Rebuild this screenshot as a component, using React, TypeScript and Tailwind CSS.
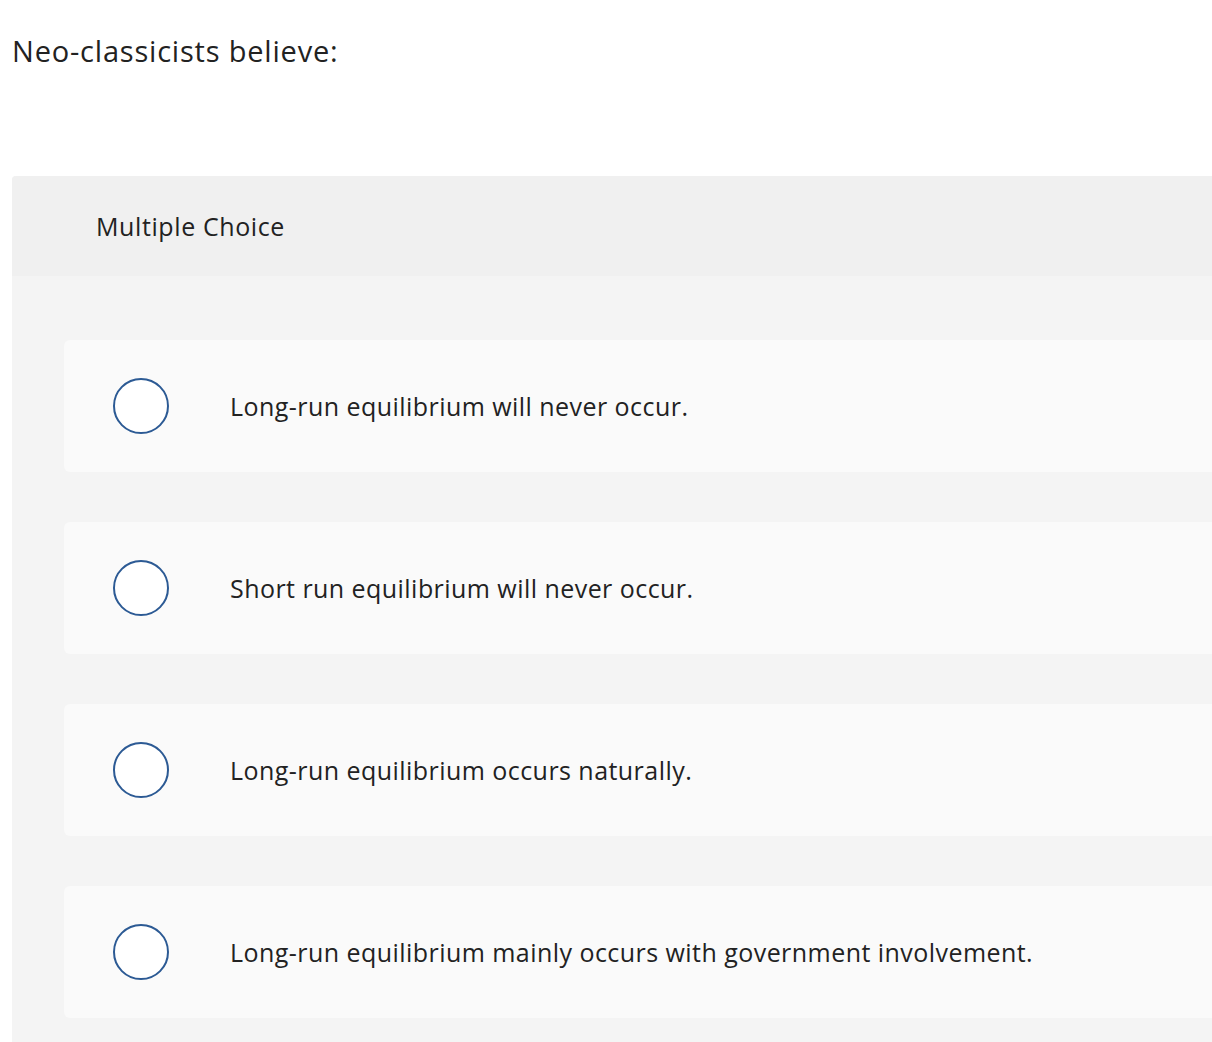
import React from 'react';

const OPTIONS = [
  'Long-run equilibrium will never occur.',
  'Short run equilibrium will never occur.',
  'Long-run equilibrium occurs naturally.',
  'Long-run equilibrium mainly occurs with government involvement.',
];

export default function App() {
  return (
    <div className="h-[1042px] w-full overflow-hidden bg-white text-[#222222] font-['Open_Sans','Liberation_Sans',sans-serif]">
      <div className="px-3 pt-[32px]">
        <p className="text-[29px] leading-[38px] tracking-[0.8px]">Neo-classicists believe:</p>
      </div>
      <div className="ml-3 mt-[106px] w-[1260px] overflow-hidden rounded-t-[4px] bg-[#f4f4f4]">
        <div className="flex h-[100px] items-center bg-[#f0f0f0] pl-[84px]">
          <span className="mt-[2px] text-[25px] tracking-[0.6px]">Multiple Choice</span>
        </div>
        <div className="flex flex-col gap-[50px] pl-[52px] pt-[64px] pb-[40px]">
          {OPTIONS.map((opt) => (
            <label key={opt} className="flex h-[132px] cursor-pointer items-center rounded-[6px] bg-[#fafafa]">
              <span className="ml-[49px] h-[56px] w-[56px] shrink-0 rounded-full border-2 border-[#2c5a94] bg-white" />
              <span className="ml-[61px] mt-[2px] text-[25px] tracking-[0.45px]">{opt}</span>
            </label>
          ))}
        </div>
      </div>
    </div>
  );
}
